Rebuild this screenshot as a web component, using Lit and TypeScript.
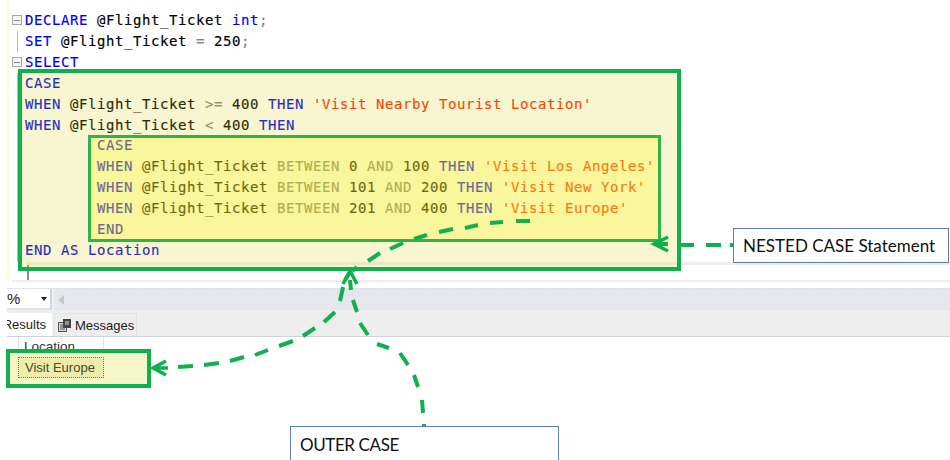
import { LitElement, html, css, svg } from "lit";
import { customElement } from "lit/decorators.js";

type Seg = [string, string];
const F = "@Flight_Ticket";
const between = (a: string, b: string, s: string): Seg[] => [
  ["k", "        WHEN "], ["t", F + " "], ["g", "BETWEEN "], ["t", a + " "], ["g", "AND "], ["t", b + " "], ["k", "THEN "], ["s", s],
];
const LINES: { fold?: string; segs: Seg[] }[] = [
  { fold: "box", segs: [["k", "DECLARE "], ["t", F + " "], ["k", "int"], ["g", ";"]] },
  { fold: "line", segs: [["k", "SET "], ["t", F + " "], ["g", "= "], ["t", "250"], ["g", ";"]] },
  { fold: "box", segs: [["k", "SELECT"]] },
  { fold: "line", segs: [["k", "CASE"]] },
  { fold: "line", segs: [["k", "WHEN "], ["t", F + " "], ["g", ">= "], ["t", "400 "], ["k", "THEN "], ["s", "'Visit Nearby Tourist Location'"]] },
  { fold: "line", segs: [["k", "WHEN "], ["t", F + " "], ["g", "< "], ["t", "400 "], ["k", "THEN"]] },
  { fold: "line", segs: [["k", "        CASE"]] },
  { fold: "line", segs: between("0", "100", "'Visit Los Angeles'") },
  { fold: "line", segs: between("101", "200", "'Visit New York'") },
  { fold: "line", segs: between("201", "400", "'Visit Europe'") },
  { fold: "line", segs: [["k", "        END"]] },
  { fold: "line", segs: [["k", "END AS "], ["k", "Location"]] },
];

const DASHES: number[][] = [
  // Nested result -> outer box
  [530, 221, 516, 221], [503, 222, 490, 223], [478, 225, 465, 228], [453, 229, 439, 232],
  [427, 235, 414, 239], [403, 243, 390, 249], [380, 253, 368, 261], [357, 267, 352, 271],
  // Results box -> outer box
  [178, 367, 193, 366], [204, 365, 219, 363], [230, 361, 244, 357], [255, 355, 268, 350],
  [279, 346, 293, 341], [303, 336, 315, 328], [324, 322, 335, 312], [340, 301, 343, 287], [345, 280, 350, 272],
  // OUTER CASE label -> outer box
  [424, 426, 424, 424], [423, 413, 422, 400], [418, 387, 414, 375], [408, 365, 400, 353],
  [389, 348, 377, 344], [368, 335, 360, 323], [357, 312, 353, 300], [351, 290, 350, 280],
  // NESTED label -> inner box
  [733, 245, 730, 245], [721, 245, 706, 245], [694, 245, 680, 245], [668, 244, 656, 244],
];
const dashPath = DASHES.map(([a, b, c, d]) => `M${a} ${b}L${c} ${d}`).join("");

@customElement("app-root")
export class AppRoot extends LitElement {
  static styles = css`
    :host { display: block; position: relative; width: 950px; height: 460px; overflow: hidden; background: #fff; }
    .app { display: flex; flex-direction: column; height: 460px; padding-left: 7px; box-sizing: border-box; }

    .editor { display: flex; height: 282px; flex: none; }
    .change { width: 2px; background: #fbfad2; flex: none; }
    .pane { flex: 1; display: flex; flex-direction: column; padding: 10px 0 0 3px; }
    .row { display: flex; align-items: center; height: 20.85px; flex: none; white-space: pre;
      font: 14px/20px "DejaVu Sans Mono", monospace; letter-spacing: 0.57px; -webkit-text-stroke: 0.15px currentColor; }
    .foldcell { width: 10px; margin-right: 3px; height: 100%; display: flex; align-items: center; justify-content: center; flex: none; }
    .foldbox { width: 8px; height: 8px; border: 1px solid #a9a9a9; background: linear-gradient(#8a8a8a,#8a8a8a) center/6px 1px no-repeat #f3f3f3; }
    .foldline { width: 1px; height: 100%; background: #b9b9b9; }
    .k { color: #0000ee; }
    .t { color: #000; }
    .g { color: #808080; }
    .s { color: #ff1e00; }
    .tail { flex: 1; display: flex; flex-direction: column; }
    .stub { width: 1px; height: 2px; margin-left: 5px; background: #b9b9b9; flex: none; }
    .tailrule { height: 3px; background: #eeeeee; flex: none; margin-left: 15px; }
    .caret { width: 2px; flex: 1; background: #8c8c8c; margin-left: 15px; }
    .endrule { height: 2px; background: #ededed; flex: none; }

    .gap { height: 6px; flex: none; }
    .toolbar { display: flex; height: 22px; flex: none; background: #eef0f3; border-top: 1px solid #dfe2e7; box-sizing: border-box; overflow: hidden; }
    .combo { width: 45px; flex: none; background: #fff; border-right: 2px solid #c9d6e6; border-bottom: 2px solid #dbe4ee; display: flex; align-items: center; justify-content: space-between; box-sizing: border-box; padding-right: 3px;
      font: 15px "Liberation Sans", sans-serif; color: #222; }
    .drop { width: 0; height: 0; border: 3.5px solid transparent; border-top: 4px solid #222; border-bottom: 0; }
    .track { flex: 1; margin-left: 2px; display: flex; align-items: center; padding-left: 4px;
      background: conic-gradient(#e8e5ea 25%, #e3e9f1 0 50%, #e8e5ea 0 75%, #e3e9f1 0) 0 0/3px 3px; }
    .left { width: 0; height: 0; border: 5px solid transparent; border-right: 6px solid #c3c6cb; border-left: 0; }

    .tabs { display: flex; height: 27px; flex: none; background: #eeeeee; border-bottom: 1px solid #cfd3d9; box-sizing: border-box; padding-top: 3px;
      font: 13px "Liberation Sans", sans-serif; color: #1c1c1c; }
    .tab { display: flex; align-items: center; box-sizing: border-box; }
    .tab.on { width: 45px; background: #fff; overflow: hidden; justify-content: flex-end; padding-right: 6px; white-space: nowrap; }
    .tab.off { width: 83px; margin-left: 2px; padding-left: 3px; gap: 4px; border: 1px solid #dfe4ea; border-bottom: 0; }

    .grid { flex: 1; padding-left: 11px; font: 13.5px "Liberation Sans", sans-serif; color: #333; }
    .th { width: 86px; height: 20px; box-sizing: border-box; border: 1px solid #e4e4e4; border-top: 0; border-bottom: 0; padding-left: 5px; line-height: 20px; }

    .hl { position: absolute; box-sizing: border-box; }
    .outer { left: 18px; top: 69px; width: 663px; height: 202px; border: 4px solid #10b04e; background: rgba(215,210,20,.2); }
    .inner { left: 88px; top: 135px; width: 573px; height: 107px; border: 3px solid #2fb34a; background: rgba(255,245,36,.3); }
    .resbox { left: 6px; top: 349px; width: 145px; height: 39px; border: 4px solid #10b04e; background: #f6f5c8; }
    .cell { position: absolute; left: 18px; top: 357px; width: 86px; height: 21px; box-sizing: border-box; border: 1px dotted #77774a; background: #efecaa;
      font: 13px/19px "Liberation Sans", sans-serif; color: #47472a; padding-left: 6px; }

    svg.arrows { position: absolute; left: 0; top: 0; width: 950px; height: 460px; pointer-events: none; }
    .dash { fill: none; stroke: #10b04e; stroke-width: 4; }
    .head { fill: none; stroke: #10b04e; stroke-width: 3.5; }

    .note { position: absolute; box-sizing: border-box; background: #fff; border: 1.5px solid #5b7fb5; display: flex; align-items: center;
      font: 17px Lato, sans-serif; color: #111; white-space: nowrap; }
    .n1 { left: 733px; top: 228px; width: 216px; height: 35px; padding-left: 9px; }
    .n2 { left: 290px; top: 426px; width: 269px; height: 36px; padding-left: 9px; letter-spacing: -0.4px; }
  `;

  render() {
    return html`
      <div class="app">
        <div class="editor">
          <div class="change"></div>
          <div class="pane">
            ${LINES.map(
              (l) => html`<div class="row">
                <div class="foldcell">${l.fold === "box" ? html`<div class="foldbox"></div>` : html`<div class="foldline"></div>`}</div>
                <div>${l.segs.map(([c, t]) => html`<span class=${c}>${t}</span>`)}</div>
              </div>`
            )}
            <div class="tail">
              <div class="stub"></div>
              <div class="tailrule"></div>
              <div class="caret"></div>
            </div>
            <div class="endrule"></div>
          </div>
        </div>
        <div class="gap"></div>
        <div class="toolbar">
          <div class="combo"><span>%</span><span class="drop"></span></div>
          <div class="track"><span class="left"></span></div>
        </div>
        <div class="tabs">
          <div class="tab on"><span>Results</span></div>
          <div class="tab off">
            <svg width="13" height="13" viewBox="0 0 13 13">
              <rect x="0.5" y="3.5" width="8" height="9" fill="#d8d8d8" stroke="#555"/>
              <rect x="5.5" y="0.5" width="7" height="8" fill="#444" stroke="#444"/>
              <path d="M2 6h5M2 8h5M2 10h5" stroke="#555"/>
              <path d="M7 3h4M7 5h4" stroke="#ddd"/>
            </svg>
            <span>Messages</span>
          </div>
        </div>
        <div class="grid"><div class="th">Location</div></div>
      </div>

      <div class="hl outer"></div>
      <div class="hl inner"></div>
      <div class="hl resbox"></div>
      <div class="cell">Visit Europe</div>

      <svg class="arrows" viewBox="0 0 950 460">
        ${svg`
          <path class="dash" d=${dashPath}/>
          <path class="head" d="M343 284 L 350 271 L 357 284"/>
          <path class="head" d="M166 361 L 153 368 L 166 375 M153 368 L 168 368"/>
          <path class="head" d="M668 237 L 654 244 L 668 251"/>
        `}
      </svg>

      <div class="note n1">NESTED CASE Statement</div>
      <div class="note n2">OUTER CASE</div>
    `;
  }
}
